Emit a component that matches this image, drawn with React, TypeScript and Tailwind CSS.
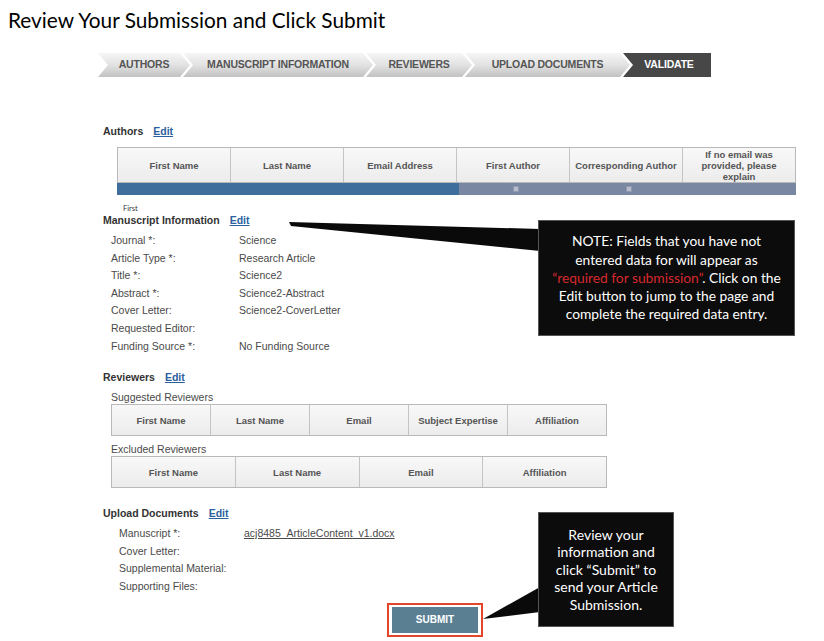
import React from "react";

const arial = { fontFamily: '"Liberation Sans", Arial, sans-serif' };
const calibri = { fontFamily: 'Lato, "Open Sans", sans-serif' };

function Seg({ label, w, first, last }: { label: string; w: number; first?: boolean; last?: boolean }) {
  const clip = last
    ? "[clip-path:polygon(0_0,100%_0,100%_100%,0_100%,10px_50%)]"
    : "[clip-path:polygon(0_0,calc(100%-10px)_0,100%_50%,calc(100%-10px)_100%,0_100%,10px_50%)]";
  return (
    <div
      className={`${clip} ${first ? "" : "ml-[-7px]"} h-[24px] flex items-center justify-center ${
        last ? "bg-[#474747] text-white" : "bg-gradient-to-b from-[#f6f6f6] via-[#e2e2e2] to-[#c2c2c2] text-[#555]"
      } text-[10.5px] font-bold tracking-[-0.2px]`}
      style={{ width: w, ...arial }}
    >
      <span className={last ? "pl-[4px]" : ""}>{label}</span>
    </div>
  );
}

function Heading({ title }: { title: string }) {
  return (
    <div className="flex items-center gap-[10px] h-[14px] leading-[14px] text-[10.5px]" style={arial}>
      <span className="font-bold text-[#333]">{title}</span>
      <span className="font-bold text-[#2b5f9e] underline">Edit</span>
    </div>
  );
}

function HeaderTable({ cols, width, height }: { cols: string[]; width: number; height: number }) {
  return (
    <div
      className="flex border border-[#b9b9b9] bg-gradient-to-b from-[#f8f8f8] to-[#ececec]"
      style={{ width, height }}
    >
      {cols.map((c, i) => (
        <div
          key={i}
          className={`flex-1 flex items-center justify-center text-center text-[9.5px] font-bold text-[#555] leading-[11px] px-1 ${
            i > 0 ? "border-l border-[#c4c4c4]" : ""
          }`}
          style={arial}
        >
          {c}
        </div>
      ))}
    </div>
  );
}

function Row({ label, value, lw, link }: { label: string; value?: string; lw: number; link?: boolean }) {
  return (
    <div className="flex h-[17.6px] leading-[17.6px] text-[10.5px] text-[#4a4a4a]" style={arial}>
      <span style={{ width: lw }}>{label}</span>
      <span className={link ? "underline" : ""}>{value}</span>
    </div>
  );
}

export default function App() {
  return (
    <div className="relative w-[824px] h-[641px] bg-white overflow-hidden">
      {/* Title */}
      <div className="h-[40px] pl-[8px] pt-[7px]">
        <div className="text-[20.8px] leading-[26px] text-black" style={calibri}>
          Review Your Submission and Click Submit
        </div>
      </div>

      {/* Breadcrumb */}
      <div className="mt-[13px] pl-[98px] flex">
        <Seg label="AUTHORS" w={92} first />
        <Seg label="MANUSCRIPT INFORMATION" w={190} />
        <Seg label="REVIEWERS" w={106} />
        <Seg label="UPLOAD DOCUMENTS" w={165} />
        <Seg label="VALIDATE" w={88} last />
      </div>

      {/* Content */}
      <div className="pl-[103px]">
        <div className="mt-[47px]">
          <Heading title="Authors" />
        </div>
        <div className="mt-[9px] ml-[14px] w-[679px]">
          <HeaderTable
            width={679}
            height={36}
            cols={[
              "First Name",
              "Last Name",
              "Email Address",
              "First Author",
              "Corresponding Author",
              "If no email was provided, please explain",
            ]}
          />
          <div className="flex h-[12px]">
            <div className="w-[342px] bg-[#3f6e9c]" />
            <div className="flex-1 bg-[#7a87a2] flex">
              <div className="w-[113px] flex items-center justify-center">
                <div className="w-[6px] h-[6px] border border-[#8f99ad] bg-[#b7bdca]" />
              </div>
              <div className="w-[113px] flex items-center justify-center">
                <div className="w-[6px] h-[6px] border border-[#8f99ad] bg-[#b7bdca]" />
              </div>
            </div>
          </div>
        </div>

        <div className="mt-[9px] ml-[20px] h-[10px] leading-[10px] text-[7.5px] text-[#333]" style={calibri}>
          First
        </div>
        <div className="mt-[-1px]">
          <Heading title="Manuscript Information" />
        </div>
        <div className="mt-[5px] ml-[8px]">
          <Row lw={128} label="Journal *:" value="Science" />
          <Row lw={128} label="Article Type *:" value="Research Article" />
          <Row lw={128} label="Title *:" value="Science2" />
          <Row lw={128} label="Abstract *:" value="Science2-Abstract" />
          <Row lw={128} label="Cover Letter:" value="Science2-CoverLetter" />
          <Row lw={128} label="Requested Editor:" />
          <Row lw={128} label="Funding Source *:" value="No Funding Source" />
        </div>

        <div className="mt-[15px]">
          <Heading title="Reviewers" />
        </div>
        <div className="ml-[8px]">
          <div className="mt-[6px] h-[14px] leading-[14px] text-[10.5px] text-[#4a4a4a]" style={arial}>
            Suggested Reviewers
          </div>
          <HeaderTable
            width={496}
            height={32}
            cols={["First Name", "Last Name", "Email", "Subject Expertise", "Affiliation"]}
          />
          <div className="mt-[6px] h-[14px] leading-[14px] text-[10.5px] text-[#4a4a4a]" style={arial}>
            Excluded Reviewers
          </div>
          <HeaderTable width={496} height={32} cols={["First Name", "Last Name", "Email", "Affiliation"]} />
        </div>

        <div className="mt-[18px]">
          <Heading title="Upload Documents" />
        </div>
        <div className="mt-[5px] ml-[16px]">
          <Row lw={125} label="Manuscript *:" value="acj8485_ArticleContent_v1.docx" link />
          <Row lw={125} label="Cover Letter:" />
          <Row lw={125} label="Supplemental Material:" />
          <Row lw={125} label="Supporting Files:" />
        </div>

        <div className="mt-[7px] ml-[284px] w-[96px] h-[34px] border-2 border-[#e2472c] px-[3px] py-[2px]">
          <div
            className="w-full h-full bg-[#5a7f93] flex items-center justify-center text-white text-[10px] font-bold"
            style={arial}
          >
            SUBMIT
          </div>
        </div>
      </div>

      {/* Callout arrows */}
      <svg className="absolute left-0 top-0 pointer-events-none" width="824" height="641">
        <polygon points="289,222 540,229 540,251 291,226" fill="#0a0a0a" />
        <polygon points="483,619 540,587 540,612" fill="#0a0a0a" />
      </svg>

      {/* Callout 1 */}
      <div
        className="absolute left-[538px] top-[220px] w-[257px] h-[116px] bg-[#0c0c0c] border border-[#555] flex items-center justify-center text-center text-white text-[13.8px] leading-[18.3px]"
        style={calibri}
      >
        <div>
          NOTE: Fields that you have not
          <br />
          entered data for will appear as
          <br />
          <span className="text-[#d8282e]">“required for submission”</span>. Click on the
          <br />
          Edit button to jump to the page and
          <br />
          complete the required data entry.
        </div>
      </div>

      {/* Callout 2 */}
      <div
        className="absolute left-[538px] top-[512px] w-[136px] h-[115px] bg-[#0c0c0c] border border-[#555] flex items-center justify-center text-center text-white text-[14px] leading-[17.6px]"
        style={calibri}
      >
        <div>
          Review your
          <br />
          information and
          <br />
          click “Submit” to
          <br />
          send your Article
          <br />
          Submission.
        </div>
      </div>
    </div>
  );
}
